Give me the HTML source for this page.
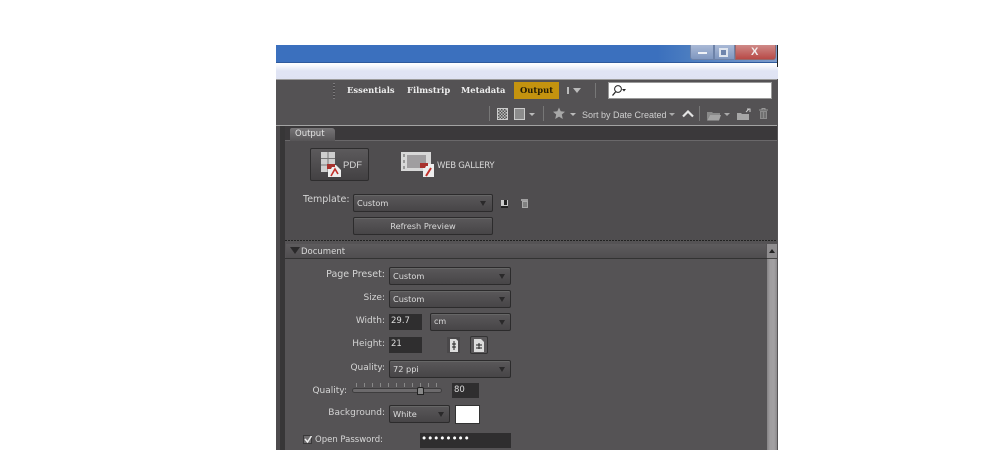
<!DOCTYPE html>
<html><head><meta charset="utf-8"><style>
html,body{margin:0;padding:0;background:#fff;width:1000px;height:450px;overflow:hidden}
div,span{position:absolute;box-sizing:border-box}
body{font-family:"DejaVu Sans","Liberation Sans",sans-serif;color:#dcdcdc}
.t{font-size:9px;white-space:nowrap;line-height:12px;color:#d8d8d8;margin-top:1px}
.l{font-size:9px;white-space:nowrap;line-height:12px;color:#d4d4d4;text-align:right;margin-top:1px}
.b{font-weight:bold;font-size:8.4px;color:#eee;font-family:"DejaVu Serif","Liberation Serif",serif;white-space:nowrap;line-height:12px;margin-top:0}
.dd{background:linear-gradient(#5a585a,#474547);border:1px solid #2c2b2c;border-radius:2px;box-shadow:0 1px 0 #666 inset}
.dd span.v{left:3px;top:2px;font-size:8.2px;color:#ddd;line-height:12px;white-space:nowrap}
.dd i{position:absolute;right:5px;top:6px;width:0;height:0;border-left:3.5px solid transparent;border-right:3.5px solid transparent;border-top:5px solid #2a292a}
.inp{background:#2f2e2f;font-size:8.5px;color:#ddd;padding:1px 0 0 2px;line-height:12px;white-space:nowrap}
</style></head><body>
<div style="left:276px;top:45px;width:502px;height:405px;overflow:hidden;background:#555355">
</div>
<!-- title -->
<div style="left:276px;top:45px;width:502px;height:17px;background:linear-gradient(90deg,#3b70be 0,#3b70be 76%,#4a7cc0 82%,#7e9ccb 100%)"></div>
<div style="left:276px;top:62px;width:502px;height:1px;background:#2f5a9c"></div>
<div style="left:276px;top:63px;width:502px;height:16px;background:linear-gradient(#fff 0,#f8f9fd 15%,#e0e4f4 50%,#dfe3f3 100%)"></div>
<div style="left:777px;top:45px;width:1px;height:22px;background:#222"></div>
<div style="left:690px;top:45px;width:24px;height:15px;background:linear-gradient(#a9b9d6,#7f97c0);border:1px solid #6d82a8;border-top:0;border-radius:0 0 0 3px"></div>
<div style="left:698px;top:52px;width:9px;height:2px;background:#eef1f6"></div>
<div style="left:714px;top:45px;width:21px;height:15px;background:linear-gradient(#a9b9d6,#7f97c0);border:1px solid #6d82a8;border-top:0"></div>
<div style="left:719px;top:48px;width:9px;height:9px;border:2px solid #dfe5ef;background:#6f85ad"></div>
<div style="left:735px;top:45px;width:41px;height:15px;background:linear-gradient(#cf8a88,#b84a47);border:1px solid #96686c;border-top:0;border-radius:0 0 3px 0"></div>
<div style="left:751px;top:45px;font:bold 11px/15px 'Liberation Sans',sans-serif;color:#f2eeee">X</div>
<!-- toolbar -->
<div style="left:276px;top:79px;width:501px;height:1px;background:#9c9c9c"></div>
<div style="left:276px;top:80px;width:501px;height:45px;background:#545254"></div>
<div style="left:276px;top:125px;width:501px;height:1px;background:#a3a3a3"></div>
<div style="left:276px;top:126px;width:501px;height:15px;background:#3b393b"></div>
<div style="left:333px;top:83px;width:2px;height:16px;background:repeating-linear-gradient(#7c7a7c 0 1px,#4a484a 1px 3px)"></div>
<div class="b" style="left:347px;top:84px">Essentials</div>
<div class="b" style="left:407px;top:84px">Filmstrip</div>
<div class="b" style="left:461px;top:84px">Metadata</div>
<div style="left:514px;top:82px;width:45px;height:17px;background:#c4930f"></div>
<div class="b" style="left:520px;top:84px;color:#241c04">Output</div>
<div style="left:567px;top:87px;width:2px;height:7px;background:#bbb"></div>
<div style="left:573px;top:88px;width:0;height:0;border-left:4.5px solid transparent;border-right:4.5px solid transparent;border-top:5px solid #bbb"></div>
<div style="left:595px;top:83px;width:1px;height:15px;background:#777"></div>
<div style="left:608px;top:82px;width:164px;height:17px;background:#fff;border:1px solid #999"></div>
<svg style="position:absolute;left:610px;top:84px" width="18" height="13"><circle cx="8" cy="5" r="3.4" fill="none" stroke="#222" stroke-width="1"/><path d="M5.500 8L2.500 11.500" stroke="#222" stroke-width="1.300"/><path d="M12 5h4l-2 2.500z" fill="#222"/></svg>
<div style="left:489px;top:106px;width:1px;height:15px;background:#777"></div>
<div style="left:497px;top:108px;width:11px;height:12px;border:1px solid #ccc;background:repeating-conic-gradient(#bbb 0 25%,#555 0 50%) 0 0/3px 3px"></div>
<div style="left:514px;top:108px;width:11px;height:12px;border:1px solid #ccc;background:#8c8c8c"></div>
<div style="left:529px;top:113px;width:0;height:0;border-left:3px solid transparent;border-right:3px solid transparent;border-top:3px solid #bbb"></div>
<div style="left:543px;top:106px;width:1px;height:15px;background:#777"></div>
<svg style="position:absolute;left:553px;top:107px" width="13" height="13"><path d="M6 0.500L7.700 4.300 12 4.700 8.800 7.500 9.800 12 6 9.600 2.200 12 3.200 7.500 0 4.700 4.300 4.300z" fill="#a8a8a8"/></svg>
<div style="left:570px;top:113px;width:0;height:0;border-left:3.5px solid transparent;border-right:3.5px solid transparent;border-top:3.5px solid #bbb"></div>
<div class="t" style="left:582px;top:108px;color:#cfcfcf;font-family:'Liberation Sans',sans-serif;font-size:9px">Sort by Date Created</div>
<div style="left:669px;top:113px;width:0;height:0;border-left:3.5px solid transparent;border-right:3.5px solid transparent;border-top:3.5px solid #aaa"></div>
<svg style="position:absolute;left:682px;top:110px" width="12" height="8"><path d="M1 6.500L6 1.500 11 6.500" fill="none" stroke="#e4e4e4" stroke-width="2.200"/></svg>
<div style="left:699px;top:106px;width:1px;height:15px;background:#777"></div>
<svg style="position:absolute;left:706px;top:109px" width="24" height="12"><path d="M1 3h5l1 1h7v2H4L1 11z" fill="#8a8a8a"/><path d="M4 6h11l-2 5.500H1z" fill="#a4a4a4"/><path d="M18 4h6l-3 3z" fill="#aaa"/></svg>
<svg style="position:absolute;left:736px;top:107px" width="16" height="14"><path d="M1 6h4l1 1h7v6H1z" fill="#a6a6a6"/><path d="M10 5l3-3M11 2h3v3" stroke="#ccc" stroke-width="1" fill="none"/></svg>
<svg style="position:absolute;left:758px;top:107px" width="11" height="13"><path d="M1 3h9M4 3V1.500h3V3" stroke="#999" fill="none"/><path d="M2 4h7v8H2z" fill="#8c8c8c"/><path d="M4 5v6M7 5v6" stroke="#555"/></svg>

<!-- left strips -->
<div style="left:276px;top:126px;width:4px;height:324px;background:#4d4b4d"></div>
<div style="left:280px;top:126px;width:5px;height:324px;background:#373637"></div>
<div style="left:285px;top:140px;width:492px;height:1px;background:#6a686a"></div>
<div style="left:285px;top:141px;width:492px;height:99px;background:#4f4d4f"></div>
<!-- tab -->
<div style="left:290px;top:128px;width:45px;height:13px;background:linear-gradient(#777577,#565456);border-radius:2px 3px 0 0"></div>
<div class="t" style="left:295px;top:127px;color:#e4e4e4;font-size:8.5px">Output</div>
<!-- PDF -->
<div style="left:310px;top:148px;width:59px;height:33px;background:linear-gradient(#5c5a5c,#434143);border:1px solid #2e2d2e;border-radius:2px"></div>
<svg style="position:absolute;left:320px;top:152px" width="22" height="26"><path d="M1 0h14v20H1z" fill="#cfcfcf"/><path d="M8 0v20M1 6.500h14M1 13h14" stroke="#777" stroke-width="1"/><path d="M8 13h8l5 5v7H8z" fill="#eee"/><path d="M7 12h8v3h-3l-1 2H7z" fill="#a8322e"/><path d="M11 24l4-7 3 5" stroke="#c1302a" stroke-width="1.600" fill="none"/></svg>
<div class="t" style="left:343px;top:159px;font-family:'Liberation Sans',sans-serif;font-size:9.5px">PDF</div>
<!-- Web gallery -->
<svg style="position:absolute;left:401px;top:152px" width="34" height="25"><rect x="0" y="0" width="30" height="19" fill="#d8d8d8"/><rect x="6" y="3" width="19" height="13" fill="#a09ea0"/><path d="M2 2h2v3H2zM2 8h2v3H2zM2 14h2v3H2z" fill="#999"/><path d="M22 12h11v13H22z" fill="#eee"/><path d="M19 11h8v3h-2l-1 2h-5z" fill="#a8322e"/><path d="M25 24l5-8" stroke="#c1302a" stroke-width="2"/></svg>
<div class="t" style="left:437px;top:159px;font-size:8.5px;letter-spacing:-.25px">WEB GALLERY</div>
<!-- template -->
<div class="l" style="left:303px;top:193px;font-size:9.5px">Template:</div>
<div class="dd" style="left:353px;top:194px;width:140px;height:18px"><span class="v">Custom</span><i style="right:6px;top:6px"></i></div>
<svg style="position:absolute;left:500px;top:199px" width="10" height="10"><rect x="1" y="1" width="7" height="8" fill="#ccc"/><rect x="4" y="1" width="3" height="5" fill="#222"/><rect x="1" y="7" width="7" height="2" fill="#222"/></svg>
<svg style="position:absolute;left:520px;top:198px" width="10" height="11"><path d="M1 2h7" stroke="#bbb" stroke-width="1.500"/><path d="M2 3h6v7H2z" fill="#aaa"/><path d="M4 4v5M6 4v5" stroke="#555"/></svg>
<div class="dd" style="left:353px;top:217px;width:140px;height:18px;text-align:center"><span style="left:0;width:100%;top:2px;font-size:8.2px;line-height:12px;color:#d8d8d8">Refresh Preview</span></div>
<!-- Document header -->
<div style="left:285px;top:240px;width:492px;height:1px;background:repeating-linear-gradient(90deg,#222 0 2px,#555 2px 3px)"></div>
<div style="left:286px;top:244px;width:480px;height:14px;background:linear-gradient(#5e5c5e,#504e50)"></div>
<div style="left:285px;top:258px;width:484px;height:1px;background:#333"></div>
<div style="left:290px;top:247px;width:0;height:0;border-left:5px solid transparent;border-right:5px solid transparent;border-top:7px solid #2a292a"></div>
<div class="t" style="left:301px;top:245px;font-size:8.5px">Document</div>
<!-- scrollbar -->
<div style="left:767px;top:244px;width:10px;height:206px;background:linear-gradient(90deg,#858385,#9f9d9f 30%,#a3a1a3 70%,#8c8a8c)"></div>
<div style="left:767px;top:244px;width:10px;height:15px;background:#8f8d8f;border-bottom:1px solid #444"></div>
<div style="left:769px;top:249px;width:0;height:0;border-left:3.5px solid transparent;border-right:3.5px solid transparent;border-bottom:4px solid #222"></div>
<!-- form -->
<div class="l" style="left:284px;top:268px;width:101px;font-size:9.500px">Page Preset:</div>
<div class="dd" style="left:389px;top:267px;width:122px;height:18px"><span class="v">Custom</span><i></i></div>
<div class="l" style="left:284px;top:291px;width:101px">Size:</div>
<div class="dd" style="left:389px;top:290px;width:122px;height:18px"><span class="v">Custom</span><i></i></div>
<div class="l" style="left:284px;top:314px;width:101px">Width:</div>
<div class="inp" style="left:389px;top:314px;width:33px;height:16px">29.7</div>
<div class="dd" style="left:430px;top:313px;width:81px;height:18px"><span class="v" style="font-size:8px">cm</span><i></i></div>
<div class="l" style="left:284px;top:337px;width:101px">Height:</div>
<div class="inp" style="left:389px;top:337px;width:33px;height:16px">21</div>
<div style="left:447px;top:337px;width:13px;height:16px;background:#4a484a"></div>
<svg style="position:absolute;left:449px;top:339px" width="10" height="13"><path d="M1 0h6l2 2v11H1z" fill="#ddd"/><path d="M5 2v9M3 5h4M3 8h4" stroke="#222"/></svg>
<div style="left:470px;top:336px;width:18px;height:18px;background:#5c5a5c;border:1px solid #343334;border-radius:2px"></div>
<svg style="position:absolute;left:473px;top:339px" width="12" height="13"><path d="M1 0h7l3 3v10H1z" fill="#ddd"/><path d="M3 6h6M3 9h6M6 4v6" stroke="#222"/></svg>
<div class="l" style="left:284px;top:361px;width:101px">Quality:</div>
<div class="dd" style="left:389px;top:360px;width:122px;height:18px"><span class="v">72 ppi</span><i></i></div>
<div class="l" style="left:284px;top:384px;width:63px">Quality:</div>
<div style="left:352px;top:388px;width:90px;height:5px;background:#6c6a6c;border:1px solid #3e3d3e;border-radius:3px"></div>
<div style="left:356px;top:383px;width:82px;height:4px;background:repeating-linear-gradient(90deg,#888 0 1px,transparent 1px 8px)"></div>
<div style="left:417px;top:387px;width:7px;height:8px;background:#888;border:1px solid #222;border-radius:2px 2px 0 0"></div>
<div class="inp" style="left:452px;top:383px;width:27px;height:15px;padding-top:1px">80</div>
<div class="l" style="left:284px;top:406px;width:101px">Background:</div>
<div class="dd" style="left:389px;top:405px;width:61px;height:18px"><span class="v">White</span><i></i></div>
<div style="left:455px;top:405px;width:25px;height:19px;background:#fff;border:1px solid #333"></div>
<div style="left:303px;top:435px;width:9px;height:9px;background:#6e6c6e;border:1px solid #3a393a"></div>
<svg style="position:absolute;left:303px;top:434px" width="10" height="10"><path d="M2 5l2.500 3L8.500 2" fill="none" stroke="#eee" stroke-width="1.500"/></svg>
<div class="t" style="left:315px;top:433px;font-size:8.5px">Open Password:</div>
<div class="inp" style="left:420px;top:433px;width:91px;height:15px;padding:0 0 0 1px;font-size:10.5px;letter-spacing:-.1px;color:#fff;line-height:13px">••••••••</div>
</body></html>
